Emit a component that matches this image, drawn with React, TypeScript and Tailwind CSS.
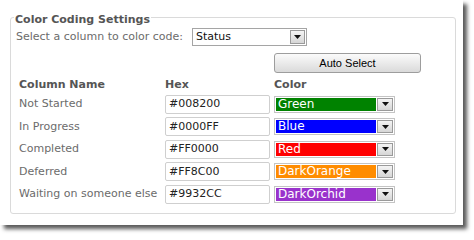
import React from "react";

const rows = [
  { name: "Not Started", hex: "#008200", label: "Green", swatch: "bg-[#008200]" },
  { name: "In Progress", hex: "#0000FF", label: "Blue", swatch: "bg-[#0000ff]" },
  { name: "Completed", hex: "#FF0000", label: "Red", swatch: "bg-[#ff0000]" },
  { name: "Deferred", hex: "#FF8C00", label: "DarkOrange", swatch: "bg-[#ff8c00]" },
  { name: "Waiting on someone else", hex: "#9932CC", label: "DarkOrchid", swatch: "bg-[#9932cc]" },
];

function Arrow({ className = "" }: { className?: string }) {
  return (
    <div
      className={`flex items-center justify-center border border-[#9a9a9a] bg-gradient-to-b from-[#f4f4f4] to-[#d6d6d6] ${className}`}
    >
      <svg width="7" height="4" viewBox="0 0 7 4">
        <path d="M0 0h7L3.5 4z" fill="#111" />
      </svg>
    </div>
  );
}

function ColorSelect({ label, swatch }: { label: string; swatch: string }) {
  return (
    <div className="flex h-[17px] w-[121px] items-stretch border border-[#c4c4c4] bg-white p-px">
      <div className={`flex flex-1 items-center pl-[2px] text-[12px] leading-[13px] text-white ${swatch}`}>
        {label}
      </div>
      <Arrow className="ml-px w-[16px]" />
    </div>
  );
}

export default function App() {
  return (
    <div className="h-[234px] w-[474px] bg-white font-['DejaVu_Sans',Verdana,sans-serif] text-[11px] leading-[14px]">
      <div className="h-[225px] w-[463px] overflow-hidden bg-white pt-[17px] pl-[10px] shadow-[4px_4px_4px_rgba(0,0,0,0.65)]">
        <div className="relative h-[197px] w-[446px] rounded-[3px] border border-[#dadada] pl-[5px]">
          <span className="absolute left-[3px] top-[-5px] bg-white px-px font-bold text-[#555]">
            Color Coding Settings
          </span>

          <div className="mt-[10px] flex h-[18px] items-center">
            <span className="text-[#6b6b6b]">Select a column to color code:</span>
            <div className="ml-[9px] flex h-[18px] w-[115px] items-center border border-[#a5a5a5] bg-white pl-[3px] pr-px">
              <span className="flex-1 text-[#111]">Status</span>
              <Arrow className="h-[14px] w-[15px]" />
            </div>
          </div>

          <div className="ml-[3px] mt-[7px] grid grid-cols-[146px_109px_auto] text-[#6b6b6b]">
            <div />
            <div />
            <button className="h-[20px] w-[147px] rounded-[3px] border border-[#9d9d9d] bg-gradient-to-b from-[#fbfbfb] to-[#dadada] font-['Liberation_Sans',Arial,sans-serif] text-[11px] text-black">
              Auto Select
            </button>

            <div className="flex h-[20px] items-center pt-[4px] font-bold text-[#555]">Column Name</div>
            <div className="flex h-[20px] items-center pt-[4px] font-bold text-[#555]">Hex</div>
            <div className="flex h-[20px] items-center pt-[4px] font-bold text-[#555]">Color</div>

            {rows.map((r) => (
              <React.Fragment key={r.name}>
                <div className="flex h-[22.5px] items-center whitespace-nowrap">{r.name}</div>
                <div className="flex h-[22.5px] items-center">
                  <div className="flex h-[19px] w-[105px] items-center rounded-[2px] border border-[#cfcfcf] bg-white pl-[3px] text-[#222]">
                    {r.hex}
                  </div>
                </div>
                <div className="flex h-[22.5px] items-center">
                  <ColorSelect label={r.label} swatch={r.swatch} />
                </div>
              </React.Fragment>
            ))}
          </div>
        </div>
      </div>
    </div>
  );
}
